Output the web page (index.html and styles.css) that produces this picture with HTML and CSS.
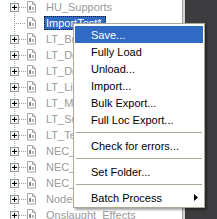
FILE: index.html
```html
<!DOCTYPE html>
<html>
<head>
<meta charset="utf-8">
<link rel="stylesheet" href="styles.css">
</head>
<body>
<div class="tree">
  <svg class="defs" width="0" height="0" aria-hidden="true">
    <symbol id="twig-plus" viewBox="0 0 26 16">
      <line x1="14.5" y1="0" x2="14.5" y2="16" stroke="#a0a0a0" stroke-dasharray="1 1"/>
      <line x1="19" y1="8.5" x2="26" y2="8.5" stroke="#a0a0a0" stroke-dasharray="1 1"/>
      <rect x="10.5" y="4.5" width="8" height="8" fill="#f6f6f2" stroke="#8c98a3"/>
      <rect x="12" y="8" width="5" height="1" fill="#000"/>
      <rect x="14" y="6" width="1" height="5" fill="#000"/>
    </symbol>
    <symbol id="twig-leaf" viewBox="0 0 26 16">
      <line x1="14.5" y1="0" x2="14.5" y2="16" stroke="#a0a0a0" stroke-dasharray="1 1"/>
      <line x1="16" y1="8.5" x2="26" y2="8.5" stroke="#a0a0a0" stroke-dasharray="1 1"/>
    </symbol>
    <symbol id="page" viewBox="0 0 16 16">
      <path d="M1.5 2.5h5l3 3v7.5h-8z" fill="#fff" stroke="#a4a4a4"/>
      <path d="M6.5 2.5v3h3" fill="none" stroke="#a4a4a4"/>
      <rect x="3" y="7" width="2" height="4" fill="#8a8a8a"/>
      <rect x="6" y="8" width="2" height="3" fill="#b8b8b8"/>
    </symbol>
  </svg>
  <ul class="rows">
    <li class="row"><svg class="twig"><use href="#twig-plus"/></svg><svg class="icon"><use href="#page"/></svg><span class="label">HU_Supports</span></li>
    <li class="row sel"><svg class="twig"><use href="#twig-leaf"/></svg><svg class="icon"><use href="#page"/></svg><span class="label">ImportTest*</span></li>
    <li class="row"><svg class="twig"><use href="#twig-plus"/></svg><svg class="icon"><use href="#page"/></svg><span class="label">LT_Bridges</span></li>
    <li class="row"><svg class="twig"><use href="#twig-plus"/></svg><svg class="icon"><use href="#page"/></svg><span class="label">LT_Debris</span></li>
    <li class="row"><svg class="twig"><use href="#twig-plus"/></svg><svg class="icon"><use href="#page"/></svg><span class="label">LT_Doors</span></li>
    <li class="row"><svg class="twig"><use href="#twig-plus"/></svg><svg class="icon"><use href="#page"/></svg><span class="label">LT_Lights</span></li>
    <li class="row"><svg class="twig"><use href="#twig-plus"/></svg><svg class="icon"><use href="#page"/></svg><span class="label">LT_Models</span></li>
    <li class="row"><svg class="twig"><use href="#twig-plus"/></svg><svg class="icon"><use href="#page"/></svg><span class="label">LT_Supports</span></li>
    <li class="row"><svg class="twig"><use href="#twig-plus"/></svg><svg class="icon"><use href="#page"/></svg><span class="label">LT_Textures</span></li>
    <li class="row"><svg class="twig"><use href="#twig-plus"/></svg><svg class="icon"><use href="#page"/></svg><span class="label">NEC_Buildings</span></li>
    <li class="row"><svg class="twig"><use href="#twig-plus"/></svg><svg class="icon"><use href="#page"/></svg><span class="label">NEC_Props</span></li>
    <li class="row"><svg class="twig"><use href="#twig-plus"/></svg><svg class="icon"><use href="#page"/></svg><span class="label">NEC_Vehicles</span></li>
    <li class="row"><svg class="twig"><use href="#twig-plus"/></svg><svg class="icon"><use href="#page"/></svg><span class="label">Nodelist</span></li>
    <li class="row"><svg class="twig"><use href="#twig-plus"/></svg><svg class="icon"><use href="#page"/></svg><span class="label">Onslaught_Effects</span></li>
  </ul>
</div>
<div class="frame"></div>
<div class="dark"></div>

<div class="menu">
  <div class="item hl">Save...</div>
  <div class="item">Fully Load</div>
  <div class="item">Unload...</div>
  <div class="item">Import...</div>
  <div class="item">Bulk Export...</div>
  <div class="item">Full Loc Export...</div>
  <div class="sep"></div>
  <div class="item">Check for errors...</div>
  <div class="sep"></div>
  <div class="item">Set Folder...</div>
  <div class="sep"></div>
  <div class="item">Batch Process<svg class="arrow" viewBox="0 0 4 7"><path d="M0 0L4 3.5L0 7z" fill="#000"/></svg></div>
</div>
</body>
</html>
```

FILE: styles.css
```css
html, body {
  margin: 0;
  padding: 0;
}

body {
  width: 217px;
  height: 219px;
  overflow: hidden;
  display: flex;
  position: relative;
  background: #3c3c3e;
  font: 11px "Liberation Sans", Arial, sans-serif;
}

.tree {
  width: 182px;
  flex: none;
  background: #fff;
  border-right: 1px solid #a0a0a0;
  overflow: hidden;
}

.defs {
  display: block;
  width: 0;
  height: 0;
}

.rows {
  list-style: none;
  margin: -1px 0 0;
  padding: 0;
}

.row {
  display: flex;
  align-items: center;
  height: 16px;
}

.twig {
  width: 26px;
  height: 16px;
  flex: none;
}

.icon {
  width: 16px;
  height: 16px;
  flex: none;
}

.label {
  margin-left: 2px;
  padding: 0 3px 0 1px;
  height: 12px;
  line-height: 12px;
  border: 1px solid transparent;
  color: #9a9a9a;
  white-space: nowrap;
}

.row.sel .label {
  background: #316ac5;
  color: #fff;
  border: 1px dotted #1a1a1a;
}

.frame {
  width: 2px;
  flex: none;
  background: #d4d4d4;
}

.dark {
  flex: 1;
  background: #3c3c3e;
}

.menu {
  position: absolute;
  left: 73px;
  top: 23px;
  width: 132px;
  box-sizing: border-box;
  background: #fff;
  border: 1px solid #aca899;
  padding: 2px 1px 1px;
  box-shadow: 2px 2px 2px rgba(0, 0, 0, 0.35);
}

.item {
  display: flex;
  align-items: center;
  height: 17px;
  padding-left: 16px;
  color: #000;
  white-space: nowrap;
}

.item.hl {
  background: #316ac5;
  color: #fff;
}

.sep {
  height: 1px;
  margin: 4px 1px;
  background: #aca899;
}

.arrow {
  width: 4px;
  height: 7px;
  margin-left: auto;
  margin-right: 5px;
}
```
